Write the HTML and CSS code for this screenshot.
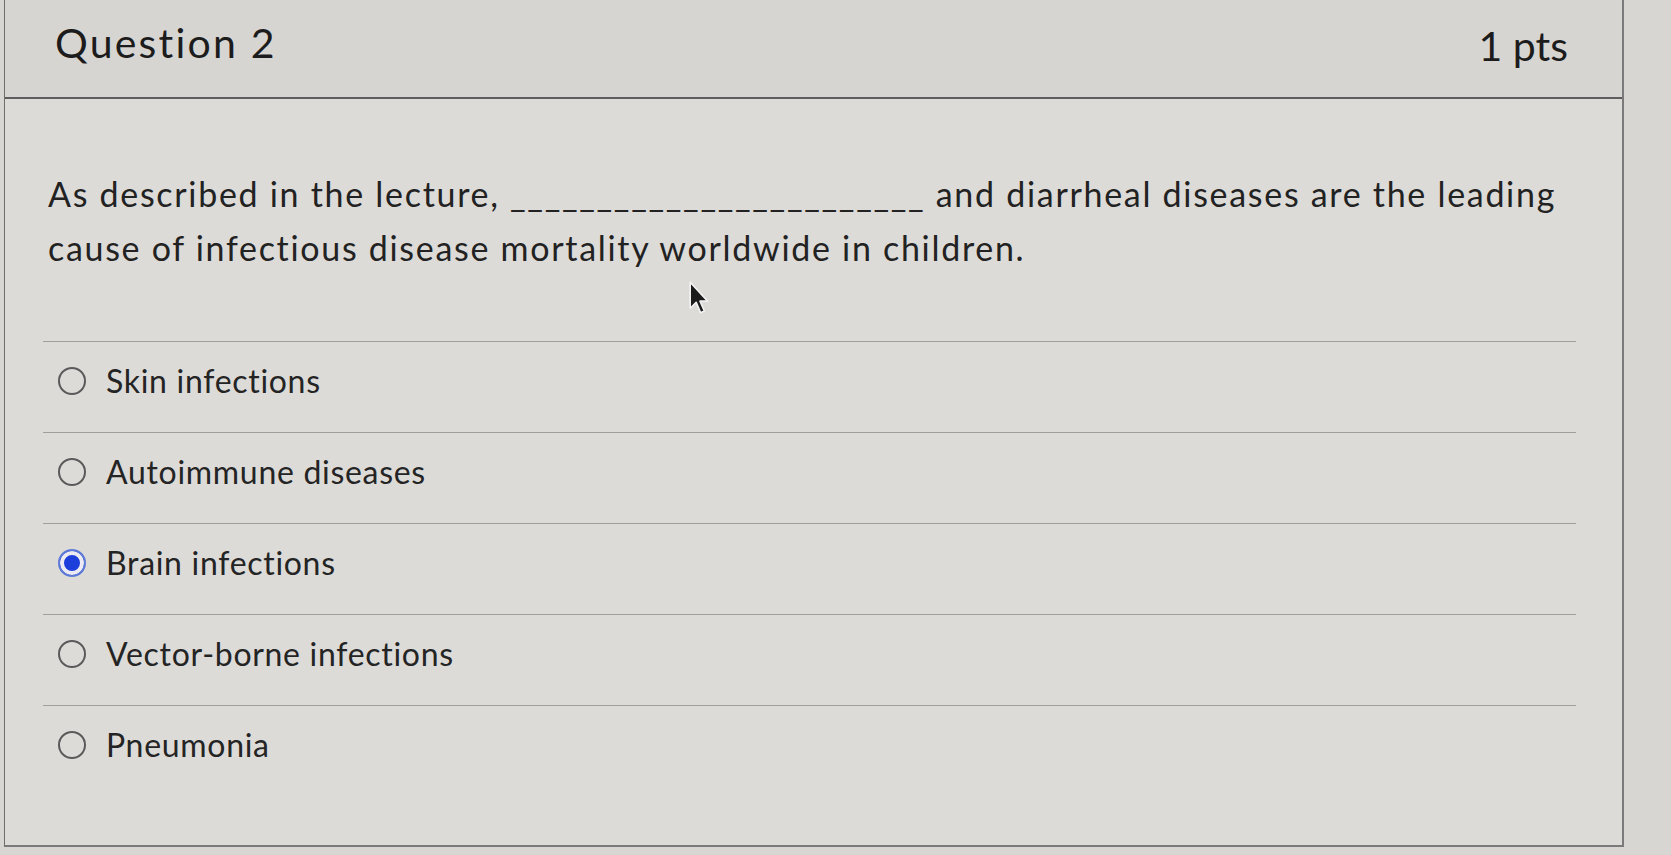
FILE: index.html
```html
<!DOCTYPE html>
<html lang="en">
<head>
<meta charset="utf-8">
<title>Question 2</title>
<link rel="stylesheet" href="styles.css">
</head>
<body>
<div class="card">
  <div class="header">
    <span class="title">Question 2</span>
    <span class="pts">1 pts</span>
  </div>
  <div class="content">
    <p class="question">As described in the lecture, ________________________ and diarrheal diseases are the leading cause of infectious disease mortality worldwide in children.</p>
    <svg class="cursor" width="24" height="36" viewBox="0 0 22 33"><path d="M2 1 L2 25 L7.5 19.5 L11.5 29 L15 27.5 L11 18.5 L18 18.5 Z" fill="#1b1b1b" stroke="#f2f2f2" stroke-width="1.5" stroke-linejoin="round"/></svg>
    <div class="answers">
      <label class="answer"><span class="radio"></span><span class="label">Skin infections</span></label>
      <label class="answer"><span class="radio"></span><span class="label">Autoimmune diseases</span></label>
      <label class="answer"><span class="radio checked"></span><span class="label">Brain infections</span></label>
      <label class="answer"><span class="radio"></span><span class="label">Vector-borne infections</span></label>
      <label class="answer"><span class="radio"></span><span class="label">Pneumonia</span></label>
    </div>
  </div>
</div>
</body>
</html>
```
FILE: styles.css
```css
html, body {
  margin: 0;
  padding: 0;
}
body {
  background: #d8d6d3;
  font-family: Lato, "Open Sans", sans-serif;
  color: #262626;
  height: 855px;
  overflow: hidden;
}
.card {
  margin-left: 4px;
  width: 1620px;
  height: 847px;
  box-sizing: border-box;
  border-left: 1px solid #6e6e6e;
  border-right: 2px solid #7a7a7a;
  border-bottom: 2px solid #7a7a7a;
  background: #dddbd8;
}
.header {
  height: 99px;
  box-sizing: border-box;
  border-bottom: 2px solid #5e5e5e;
  background: #d7d5d2;
  display: flex;
  justify-content: space-between;
  align-items: flex-start;
  padding: 19px 54px 0 50px;
  font-size: 41px;
  line-height: 48px;
  color: #1c1c1c;
}
.title {
  letter-spacing: 2.2px;
}
.pts {
  padding-top: 3px;
}
.content {
  position: relative;
  padding: 68px 46px 0 38px;
}
.question {
  margin: 0;
  padding-left: 5px;
  font-size: 34px;
  line-height: 54px;
  letter-spacing: 1.7px;
  color: #222;
}
.cursor {
  position: absolute;
  left: 683px;
  top: 182px;
}
.answers {
  margin-top: 66px;
}
.answer {
  display: flex;
  align-items: center;
  height: 91px;
  box-sizing: border-box;
  border-top: 1.5px solid #a19f9c;
  padding: 0 0 12px 15px;
}
.radio {
  width: 28px;
  height: 28px;
  box-sizing: border-box;
  border: 2px solid #5a5a5a;
  border-radius: 50%;
  flex: none;
  margin-right: 20px;
}
.radio.checked {
  border: 2.5px solid #5d7bd6;
  background: #1c3fdc;
  box-shadow: inset 0 0 0 4px #eceaf2;
}
.label {
  font-size: 32px;
  line-height: 36px;
  letter-spacing: 0.7px;
  color: #242424;
}
```
